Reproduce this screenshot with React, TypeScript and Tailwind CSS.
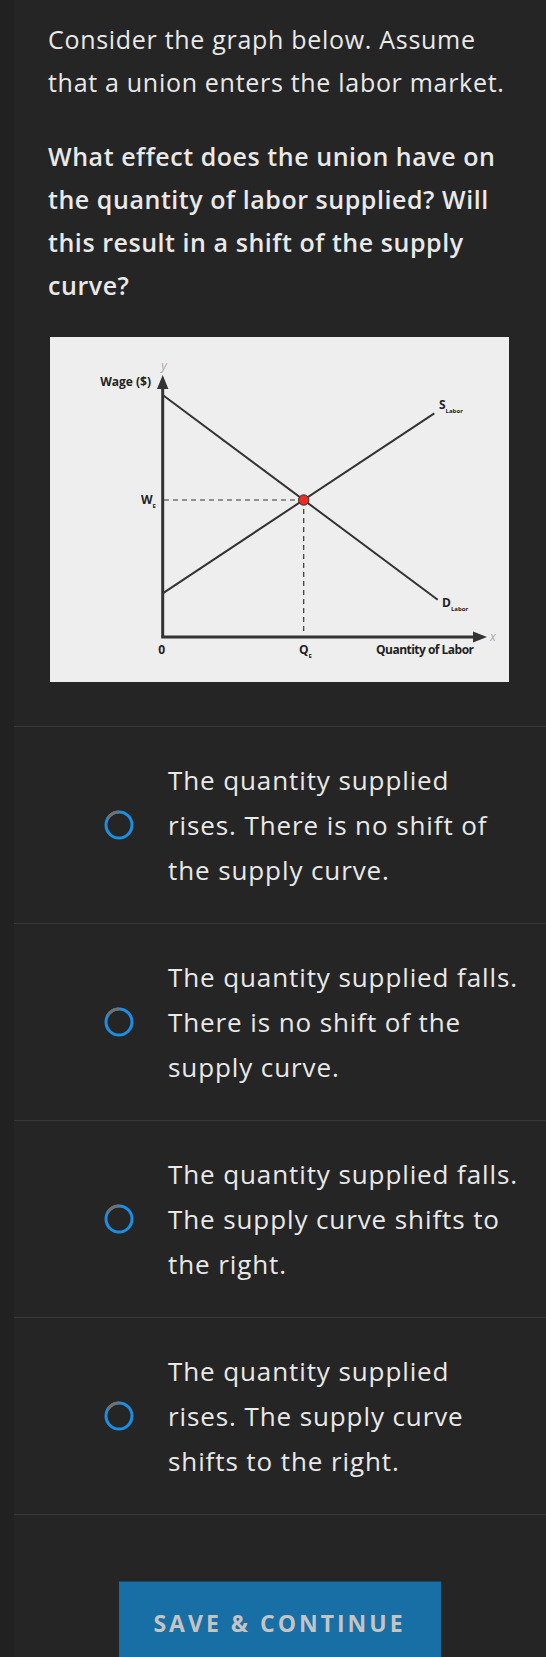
import React from 'react'

const font = { fontFamily: '"Open Sans", Lato, sans-serif', fontVariantLigatures: 'none' as const }

const options = [
  ['The quantity supplied', 'rises. There is no shift of', 'the supply curve.'],
  ['The quantity supplied falls.', 'There is no shift of the', 'supply curve.'],
  ['The quantity supplied falls.', 'The supply curve shifts to', 'the right.'],
  ['The quantity supplied', 'rises. The supply curve', 'shifts to the right.'],
]

function Radio() {
  return (
    <svg width="30" height="30" viewBox="0 0 30 30" className="shrink-0">
      <circle cx="15" cy="15" r="13" fill="none" stroke="#1b8fe2" strokeWidth="3" />
      <path d="M3.74 8.5 A13 13 0 0 1 15 2" fill="none" stroke="#707070" strokeWidth="3" />
    </svg>
  )
}

function LaborGraph() {
  const txt = { fontFamily: '"Open Sans", sans-serif', fill: '#222' }
  return (
    <svg width="459" height="345" viewBox="0 0 459 345" className="block bg-[#eeeeee]">
      {/* axes */}
      <line x1="112.7" y1="300" x2="112.7" y2="46" stroke="#333" strokeWidth="3" />
      <polygon points="112.7,38 107,52 118.4,52" fill="#333" />
      <line x1="111.2" y1="300" x2="428" y2="300" stroke="#333" strokeWidth="3" />
      <polygon points="437,300 423,294.5 423,305.5" fill="#333" />
      <text x="114" y="33" fontSize="12" fontStyle="italic" fill="#a8a8a8" textAnchor="middle" fontFamily="Open Sans, sans-serif">y</text>
      <text x="443" y="304" fontSize="12" fontStyle="italic" fill="#a8a8a8" textAnchor="middle" fontFamily="Open Sans, sans-serif">x</text>

      {/* demand + supply */}
      <line x1="112.7" y1="58" x2="387.7" y2="262.7" stroke="#333" strokeWidth="2" />
      <line x1="112.7" y1="256.3" x2="384.3" y2="76.3" stroke="#333" strokeWidth="2" />

      {/* equilibrium guides */}
      <line x1="114" y1="163" x2="253.7" y2="163" stroke="#333" strokeWidth="1.2" strokeDasharray="5 4" />
      <line x1="253.7" y1="163" x2="253.7" y2="298" stroke="#333" strokeWidth="1.2" strokeDasharray="5 4" />
      <circle cx="253.7" cy="163" r="5.2" fill="#ee2a24" stroke="#333" strokeWidth="1" />

      {/* labels */}
      <text x="101" y="49" fontSize="12" fontWeight="700" textAnchor="end" style={txt}>Wage ($)</text>
      <text x="91" y="167" fontSize="12" fontWeight="700" style={txt}>W<tspan fontSize="6" dy="4">E</tspan></text>
      <text x="111.7" y="317" fontSize="12" fontWeight="700" textAnchor="middle" style={txt}>0</text>
      <text x="249" y="317" fontSize="12" fontWeight="700" style={txt}>Q<tspan fontSize="6" dy="4">E</tspan></text>
      <text x="326" y="317" fontSize="12" fontWeight="700" style={txt} textLength="98">Quantity of Labor</text>
      <text x="389" y="72" fontSize="12" fontWeight="700" style={txt}>S<tspan fontSize="6" dy="4">Labor</tspan></text>
      <text x="392" y="270" fontSize="12" fontWeight="700" style={txt}>D<tspan fontSize="6" dy="4">Labor</tspan></text>
    </svg>
  )
}

export default function App() {
  return (
    <div className="min-h-screen bg-[#212121] pl-[14px]" style={font}>
      <div className="bg-[#252525] min-h-screen text-[#e9e9e9]">
        <div className="pl-[34px] pt-[18px] text-[25px] leading-[43px]">
          <p className="tracking-[0.7px]">
            <span className="block">Consider the graph below. Assume</span>
            <span className="block">that a union enters the labor market.</span>
          </p>
          <p className="mt-[31px] font-semibold tracking-[0.55px]">
            <span className="block">What effect does the union have on</span>
            <span className="block">the quantity of labor supplied? Will</span>
            <span className="block">this result in a shift of the supply</span>
            <span className="block">curve?</span>
          </p>
          <div className="mt-[30px] ml-[2px]">
            <LaborGraph />
          </div>
        </div>

        <div className="mt-[44px]">
          {options.map((lines, i) => (
            <div key={i} className="border-t border-[#383838] flex items-center h-[197px] pl-[90px]">
              <Radio />
              <div className="ml-[34px] text-[26px] leading-[45px] tracking-[0.9px]">
                {lines.map(l => <span key={l} className="block">{l}</span>)}
              </div>
            </div>
          ))}
          <div className="border-t border-[#383838] pt-[66px] flex justify-center pr-[1px]">
            <button className="w-[322px] h-[84px] bg-[#176fa6] border-t border-[#1b4b6b] text-[#c4c4c4] text-[23px] font-bold tracking-[3px]">
              SAVE &amp; CONTINUE
            </button>
          </div>
        </div>
      </div>
    </div>
  )
}
